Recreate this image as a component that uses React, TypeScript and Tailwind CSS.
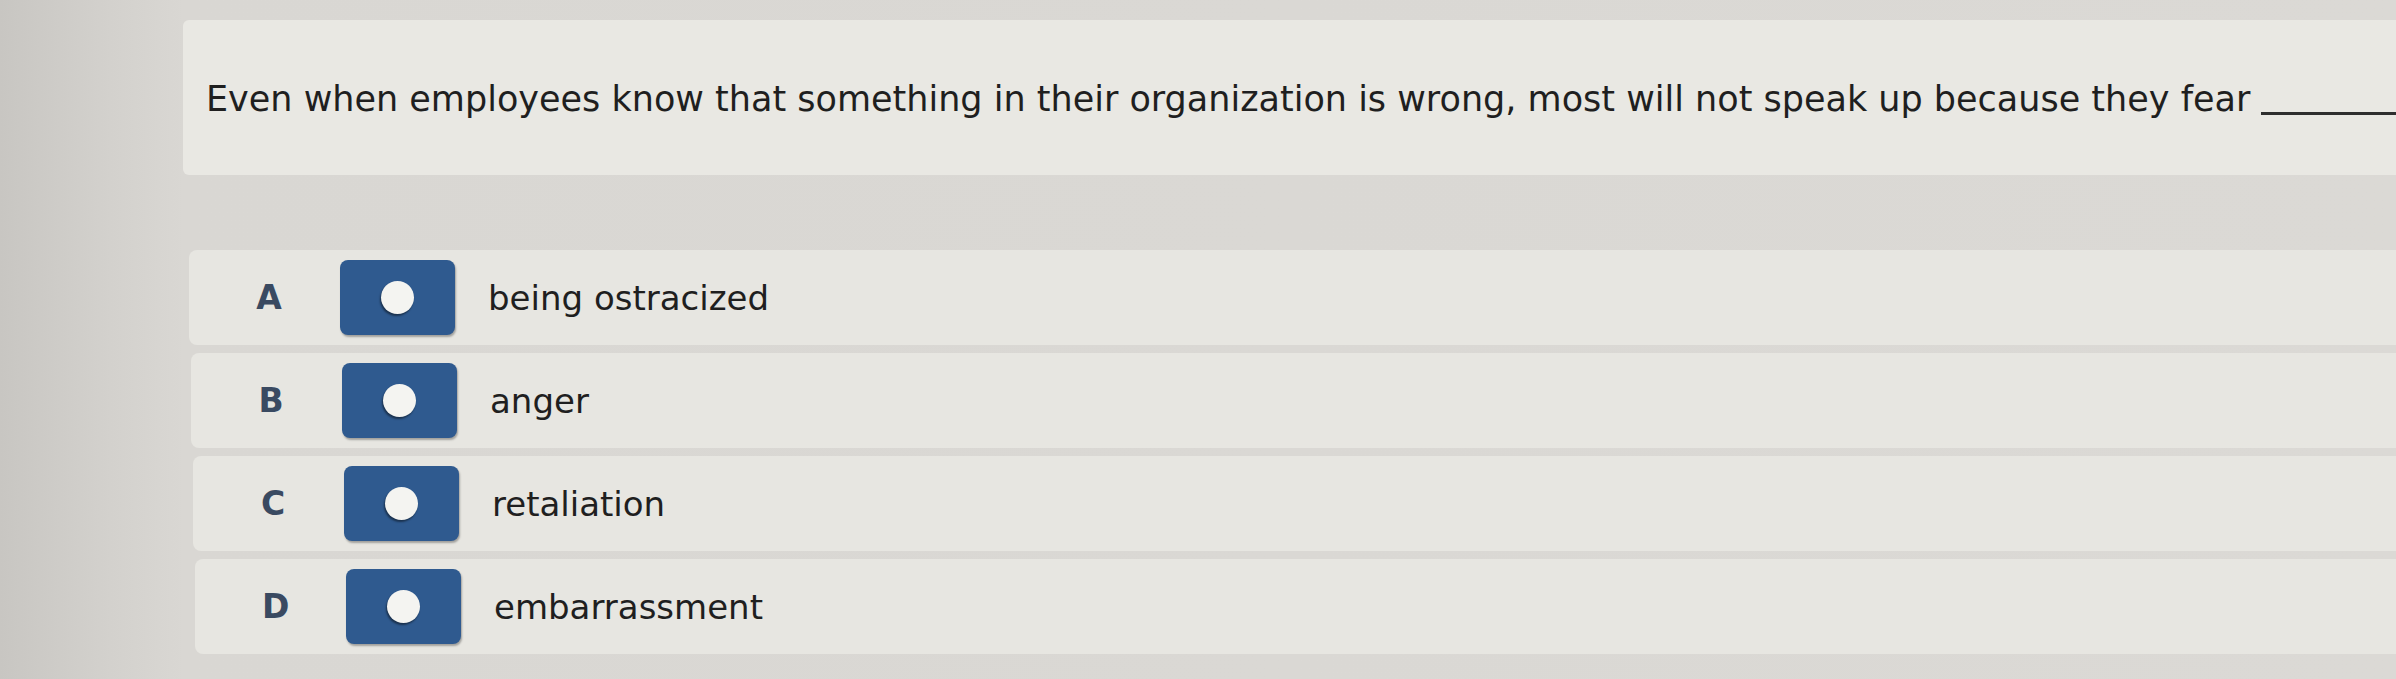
import React from "react";

const options = [
  { letter: "A", text: "being ostracized", shift: "ml-[0px]" },
  { letter: "B", text: "anger", shift: "ml-[2px]" },
  { letter: "C", text: "retaliation", shift: "ml-[4px]" },
  { letter: "D", text: "embarrassment", shift: "ml-[6px]" },
];

function Radio() {
  return (
    <div className="flex h-[75px] w-[115px] shrink-0 items-center justify-center rounded-[8px] bg-[#2f5a8f] shadow-[1px_2px_2px_rgba(0,0,0,0.3)]">
      <div className="h-[33px] w-[33px] rounded-full bg-[#f4f4f1] shadow-[-1px_2px_2px_rgba(0,0,0,0.45)]" />
    </div>
  );
}

export default function App() {
  return (
    <div className="h-[679px] w-[2396px] overflow-hidden bg-[linear-gradient(90deg,#c8c6c2_0px,#d3d1cd_110px,#d9d7d3_183px,#dbd9d5_100%)] font-['DejaVu_Sans','Verdana',sans-serif]">
      <div className="flex flex-col pl-[183px] pt-[20px]">
        <div className="-mr-[40px] flex h-[155px] items-center rounded-[6px] bg-[#e9e8e3] pl-[23px] pt-[2px]">
          <p className="whitespace-nowrap text-[35px] leading-[40px] text-[#1f1f1f]">
            Even when employees know that something in their organization is wrong, most will not speak up because they fear{" "}
            <span className="inline-block h-[3px] w-[240px] bg-[#2e2e2e] align-[-4px]" />
          </p>
        </div>

        <div className="mt-[75px] flex flex-col gap-[8px] pl-[6px]">
          {options.map((o) => (
            <div
              key={o.letter}
              className={`-mr-[60px] flex h-[95px] items-center rounded-[8px] bg-[#e7e6e1] ${o.shift}`}
            >
              <span className="ml-[67px] w-[26px] text-center text-[33px] font-bold leading-none text-[#3a4a61]">
                {o.letter}
              </span>
              <div className="ml-[58px]">
                <Radio />
              </div>
              <span className="ml-[33px] whitespace-nowrap text-[34px] leading-none text-[#1f1f1f]">
                {o.text}
              </span>
            </div>
          ))}
        </div>
      </div>
    </div>
  );
}
